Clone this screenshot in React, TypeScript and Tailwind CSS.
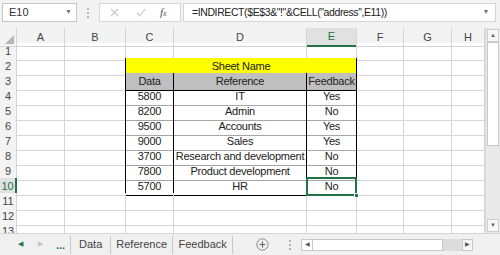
import type { ReactNode } from "react";

const COLS = ["A", "B", "C", "D", "E", "F", "G", "H"];
const GRID = "grid grid-cols-[17px_48px_61px_48px_133px_50px_47px_48px_33px]";

type Row = { n: number; cells?: [string, string, string] };

const rows: Row[] = [
  { n: 1 },
  { n: 2 },
  { n: 3, cells: ["Data", "Reference", "Feedback"] },
  { n: 4, cells: ["5800", "IT", "Yes"] },
  { n: 5, cells: ["8200", "Admin", "No"] },
  { n: 6, cells: ["9500", "Accounts", "Yes"] },
  { n: 7, cells: ["9000", "Sales", "Yes"] },
  { n: 8, cells: ["3700", "Research and development", "No"] },
  { n: 9, cells: ["7800", "Product development", "No"] },
  { n: 10, cells: ["5700", "HR", "No"] },
  { n: 11 },
  { n: 12 },
  { n: 13 }
];

function FormulaBar() {
  return (
    <div className="flex h-[28px] items-start bg-[#f3f3f3] pt-[3px]">
      <div className="ml-[2px] flex h-[19px] w-[75px] items-center justify-between border border-[#c6c6c6] bg-white pl-[6px] pr-[4px] text-[11px] text-[#333]">
        <span>E10</span>
        <span className="text-[7px] text-[#777]">▼</span>
      </div>
      <div className="ml-[10px] flex h-[19px] flex-col items-center justify-center gap-[2px]">
        <span className="h-[2px] w-[2px] bg-[#b5b5b5]" />
        <span className="h-[2px] w-[2px] bg-[#b5b5b5]" />
        <span className="h-[2px] w-[2px] bg-[#b5b5b5]" />
      </div>
      <div className="ml-[10px] flex h-[19px] w-[82px] items-center border border-[#d6d6d6] bg-white text-[#c2c2c2]">
        <svg className="ml-[10px]" width="9" height="9" viewBox="0 0 9 9">
          <path d="M1 1L8 8M8 1L1 8" stroke="#c6c6c6" strokeWidth="1.1" />
        </svg>
        <svg className="ml-[17px]" width="10" height="9" viewBox="0 0 10 9">
          <path d="M1 5L4 8L9 1" stroke="#c6c6c6" strokeWidth="1.1" fill="none" />
        </svg>
        <span className="ml-[14px] font-['Liberation_Serif',serif] text-[11px] italic text-[#555]">
          f<span className="text-[8px]">x</span>
        </span>
      </div>
      <div className="ml-[2px] flex h-[19px] w-[313px] items-center justify-between border border-[#d6d6d6] bg-white pl-[8px] pr-[6px] text-[10.5px] tracking-[-0.4px] text-[#222]">
        <span>=INDIRECT($E$3&amp;"!"&amp;CELL("address",E11))</span>
        <span className="text-[7px] text-[#777]">▼</span>
      </div>
    </div>
  );
}

function HeaderRow() {
  return (
    <div className={`${GRID} h-[15px] bg-[#f3f3f3] text-[11px] text-[#444]`}>
      <div className="relative border-b border-r border-[#d4d4d4]">
        <span className="absolute bottom-[2px] right-[2px] h-0 w-0 border-b-[9px] border-l-[9px] border-b-[#b8b8b8] border-l-transparent" />
      </div>
      {COLS.map((c) =>
        c === "E" ? (
          <div key={c} className="flex items-center justify-center border-b-2 border-r border-b-[#217346] border-r-[#d4d4d4] bg-[#e1e1e1] text-[#217346]">
            {c}
          </div>
        ) : (
          <div key={c} className="flex items-center justify-center border-b border-r border-[#d4d4d4]">
            {c}
          </div>
        )
      )}
    </div>
  );
}

function Cell({ className, children }: { className: string; children?: ReactNode }) {
  return <div className={`flex items-center justify-center overflow-visible whitespace-nowrap ${className}`}>{children}</div>;
}

function SheetRow({ row }: { row: Row }) {
  const inTable = row.n >= 2 && row.n <= 10;
  const active = row.n === 10;
  const bottomBlack = row.n === 1 || row.n === 2 || row.n === 10;
  const tableBottom = row.n === 3 ? "border-b-black" : bottomBlack ? "border-b-black" : "border-b-[#a6a6a6]";

  return (
    <div className={`${GRID} h-[15px] text-[11px] tracking-[-0.25px] text-[#222]`}>
      {active ? (
        <div className="flex items-center justify-center border-b border-r-2 border-b-[#d4d4d4] border-r-[#217346] bg-[#e1e1e1] tracking-normal text-[#217346]">
          {row.n}
        </div>
      ) : (
        <div className="flex items-center justify-center border-b border-r border-[#d4d4d4] bg-[#f3f3f3] tracking-normal text-[#444]">{row.n}</div>
      )}
      <Cell className="border-b border-r border-[#d4d4d4]" />
      <Cell className={`border-b border-r border-b-[#d4d4d4] ${inTable ? "border-r-black" : "border-r-[#d4d4d4]"}`} />
      {row.n === 2 ? (
        <Cell className="col-span-3 border-b border-r border-black bg-[#ffff00]">Sheet Name</Cell>
      ) : row.cells ? (
        <>
          <Cell className={`border-b border-r border-r-black ${tableBottom} ${row.n === 3 ? "bg-[#bfbfbf]" : ""}`}>{row.cells[0]}</Cell>
          <Cell className={`border-b border-r border-r-black ${tableBottom} ${row.n === 3 ? "bg-[#bfbfbf]" : ""}`}>{row.cells[1]}</Cell>
          {active ? (
            <div className="relative flex items-center justify-center border-b border-r border-b-black border-r-black">
              <div className="absolute inset-[-1px] border-2 border-[#217346]" />
              <span className="absolute bottom-[-3px] right-[-3px] h-[5px] w-[5px] border border-white bg-[#217346]" />
              No
            </div>
          ) : (
            <Cell className={`border-b border-r border-r-black ${tableBottom} ${row.n === 3 ? "bg-[#bfbfbf]" : ""}`}>{row.cells[2]}</Cell>
          )}
        </>
      ) : (
        <>
          <Cell className={`border-b border-r border-r-[#d4d4d4] ${bottomBlack ? "border-b-black" : "border-b-[#d4d4d4]"}`} />
          <Cell className={`border-b border-r border-r-[#d4d4d4] ${bottomBlack ? "border-b-black" : "border-b-[#d4d4d4]"}`} />
          <Cell className={`border-b border-r border-r-[#d4d4d4] ${bottomBlack ? "border-b-black" : "border-b-[#d4d4d4]"}`} />
        </>
      )}
      <Cell className={`border-b border-r border-[#d4d4d4] ${inTable ? "border-l border-l-black ml-[-1px]" : ""}`} />
      <Cell className="border-b border-r border-[#d4d4d4]" />
      <Cell className="border-b border-r border-[#d4d4d4]" />
      <Cell className="border-b border-[#d4d4d4]" />
    </div>
  );
}

function VerticalScroll() {
  return (
    <div className="flex w-[15px] flex-col border-l border-[#dadada] bg-[#e9e9e9] px-[1px]">
      <div className="mt-[1px] flex h-[13px] items-center justify-center border border-[#cfcfcf] bg-[#f7f7f7] text-[6px] text-[#666]">▲</div>
      <div className="h-[104px] border border-[#c8c8c8] bg-white" />
      <div className="flex-1" />
      <div className="mb-[1px] flex h-[13px] items-center justify-center border border-[#cfcfcf] bg-[#f7f7f7] text-[6px] text-[#666]">▼</div>
    </div>
  );
}

function TabBar() {
  return (
    <div className="flex h-[22px] items-center border-t border-[#d4d4d4] bg-[#f0f0f0] text-[11px] text-[#444]">
      <span className="ml-[18px] text-[7px] text-[#217346]">◀</span>
      <span className="ml-[15px] text-[7px] text-[#c4c4c4]">▶</span>
      <span className="ml-[13px] mt-[2px] font-bold leading-none text-[#217346]">...</span>
      <span className="ml-[5px] h-[18px] w-px bg-[#c8c8c8]" />
      <span className="w-[39px] text-center">Data</span>
      <span className="h-[18px] w-px bg-[#c8c8c8]" />
      <span className="w-[61px] text-center">Reference</span>
      <span className="h-[18px] w-px bg-[#c8c8c8]" />
      <span className="w-[59px] text-center">Feedback</span>
      <span className="h-[18px] w-px bg-[#c8c8c8]" />
      <svg className="ml-[23px]" width="13" height="13" viewBox="0 0 13 13">
        <circle cx="6.5" cy="6.5" r="5.7" fill="none" stroke="#8a8a8a" strokeWidth="1" />
        <path d="M6.5 3.5V9.5M3.5 6.5H9.5" stroke="#6a6a6a" strokeWidth="1.2" />
      </svg>
      <div className="ml-[20px] flex flex-col gap-[2px]">
        <span className="h-[2px] w-[2px] bg-[#b5b5b5]" />
        <span className="h-[2px] w-[2px] bg-[#b5b5b5]" />
        <span className="h-[2px] w-[2px] bg-[#b5b5b5]" />
      </div>
      <div className="ml-[10px] flex h-[12px] w-[172px] items-stretch bg-[#dcdcdc]">
        <div className="flex w-[12px] items-center justify-center border border-[#c8c8c8] bg-white text-[6px] text-[#555]">◀</div>
        <div className="w-[130px] border-y border-r border-[#c8c8c8] bg-white" />
        <div className="flex-1" />
        <div className="flex w-[11px] items-center justify-center border border-[#c8c8c8] bg-[#f7f7f7] text-[6px] text-[#555]">▶</div>
      </div>
    </div>
  );
}

export default function App() {
  return (
    <div className="h-[255px] w-[500px] overflow-hidden bg-white font-['Liberation_Sans',Arial,sans-serif]">
      <FormulaBar />
      <div className="flex h-[205px]">
        <div className="w-[485px] overflow-hidden">
          <HeaderRow />
          {rows.map((row) => (
            <SheetRow key={row.n} row={row} />
          ))}
        </div>
        <VerticalScroll />
      </div>
      <TabBar />
    </div>
  );
}
